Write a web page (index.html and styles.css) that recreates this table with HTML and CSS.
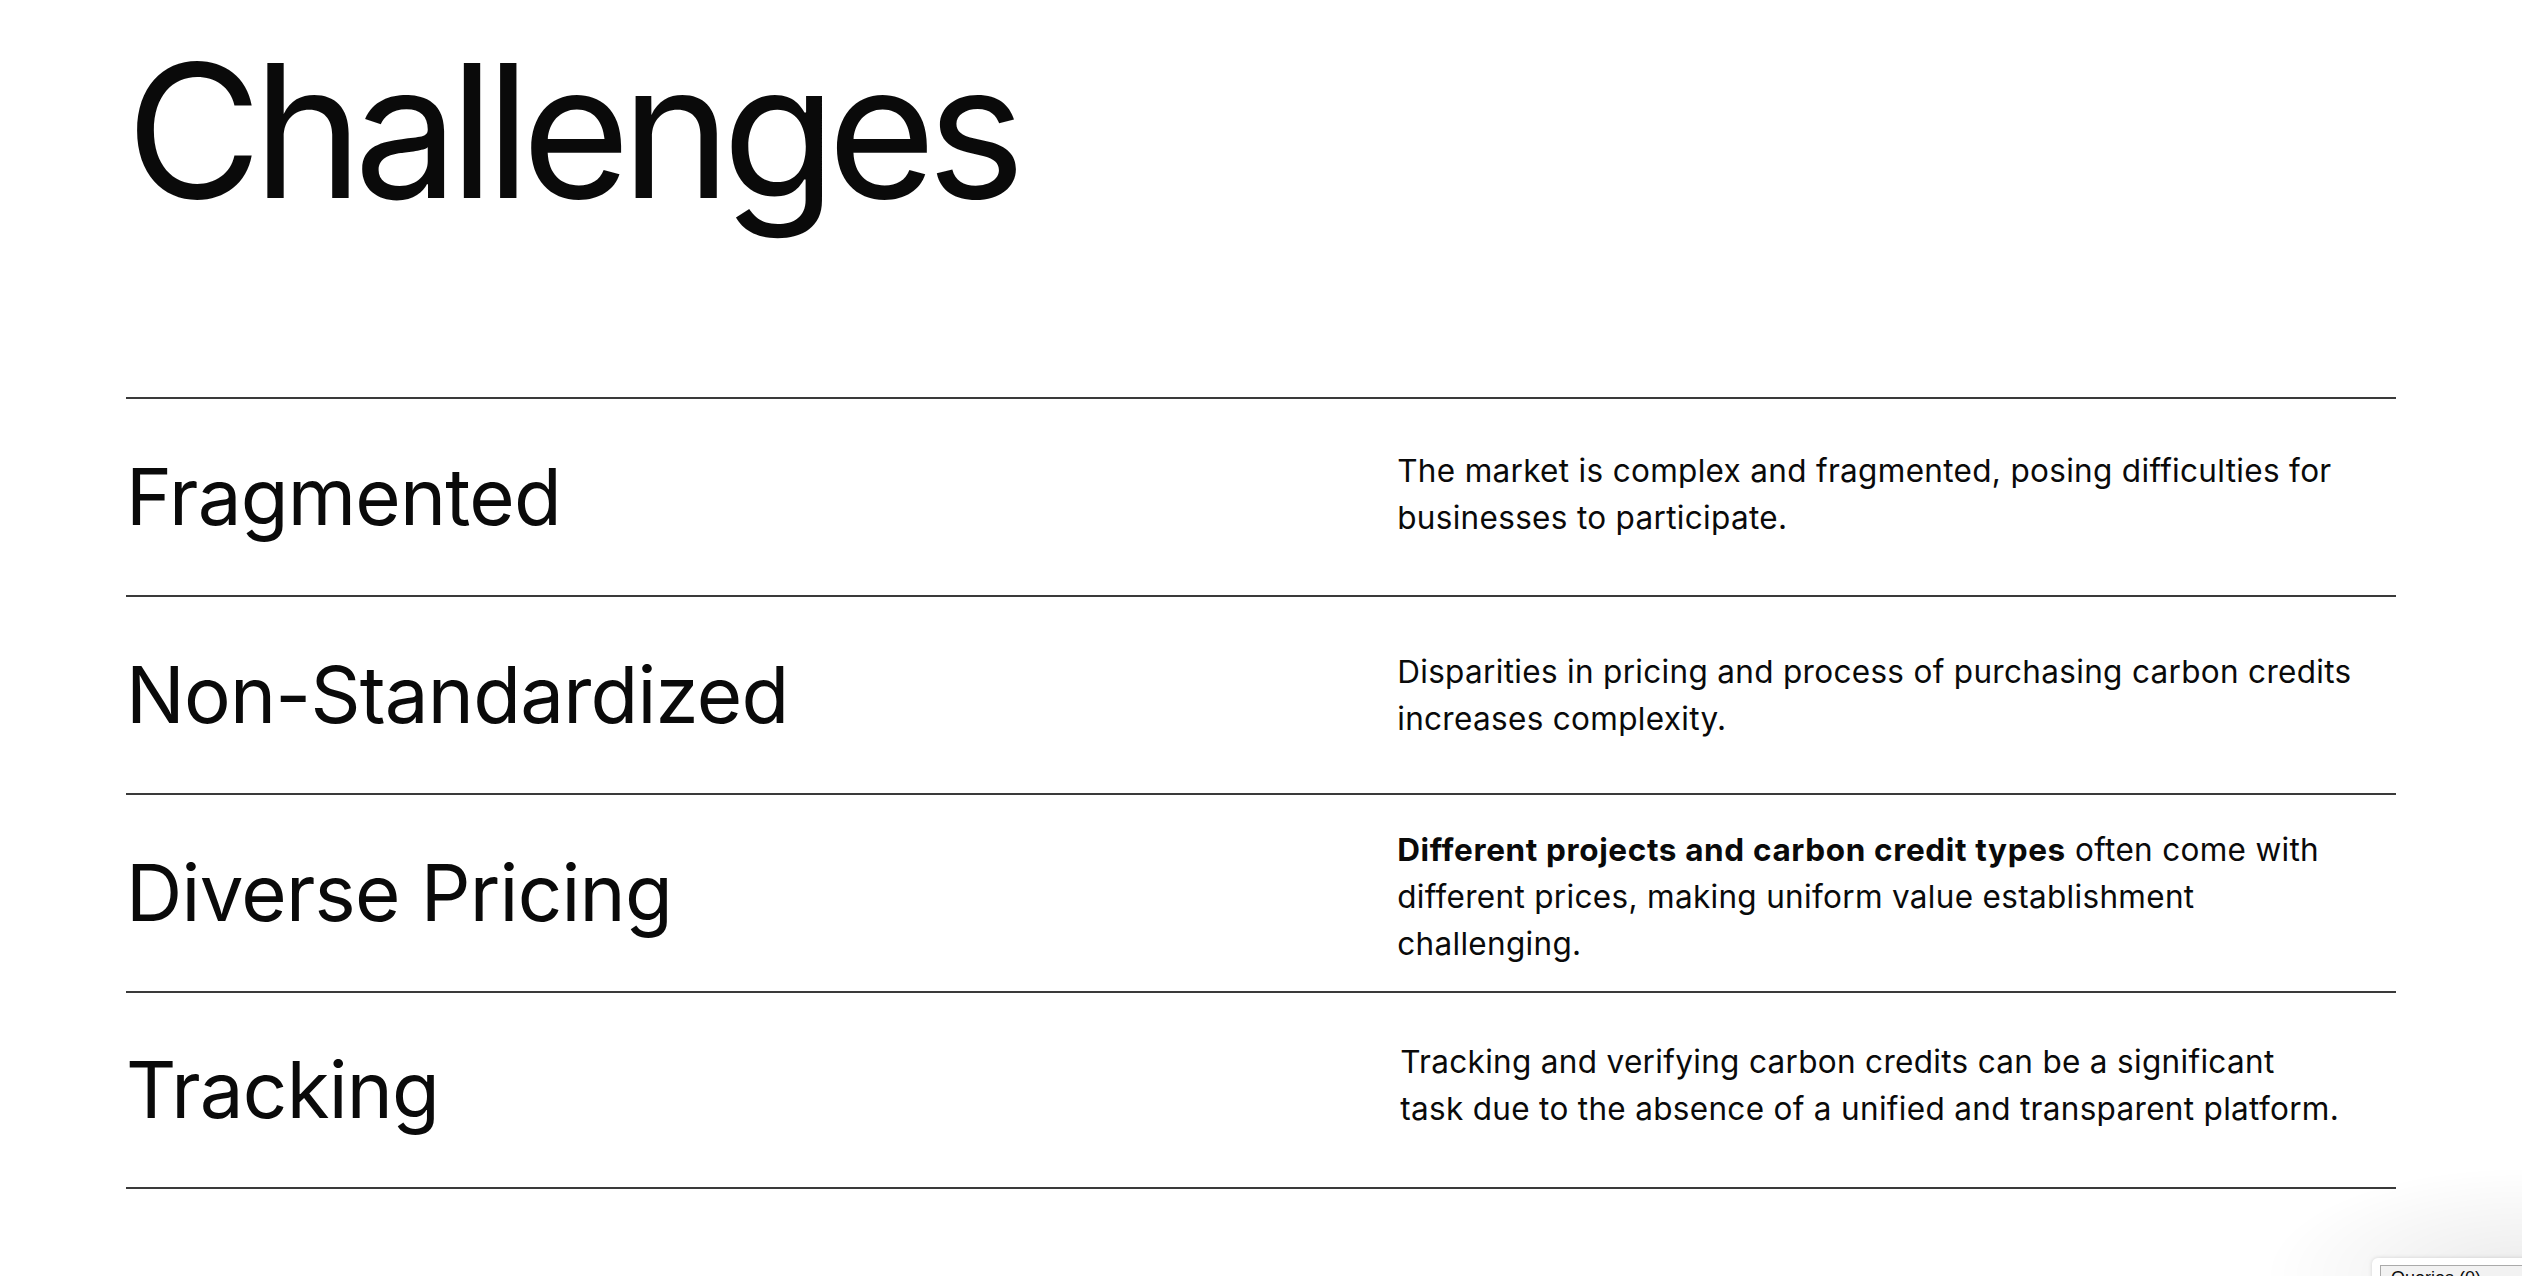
FILE: index.html
```html
<!DOCTYPE html>
<html lang="en">
<head>
<meta charset="utf-8">
<title>Challenges</title>
<link rel="stylesheet" href="styles.css">
</head>
<body>
<main class="page">
  <h1 class="title">Challenges</h1>
  <section class="list">
    <div class="row">
      <h2 class="row-title">Fragmented</h2>
      <p class="row-text">The market is complex and fragmented, posing difficulties for businesses to participate.</p>
    </div>
    <div class="row">
      <h2 class="row-title">Non-Standardized</h2>
      <p class="row-text row-text--low">Disparities in pricing and process of purchasing carbon credits increases complexity.</p>
    </div>
    <div class="row">
      <h2 class="row-title">Diverse Pricing</h2>
      <p class="row-text row-text--lower"><strong>Different projects and carbon credit types</strong> often come with different prices, making uniform value establishment challenging.</p>
    </div>
    <div class="row">
      <h2 class="row-title">Tracking</h2>
      <p class="row-text row-text--indent">Tracking and verifying carbon credits can be a significant<br>task due to the absence of a unified and transparent platform.</p>
    </div>
  </section>
</main>
<div class="corner-shade"></div>
<div class="corner-widget"><div class="corner-widget-inner">Queries (0)</div></div>
</body>
</html>
```
FILE: styles.css
```css
* { box-sizing: border-box; }
html, body { margin: 0; padding: 0; background: #fff; }
body {
  font-family: "Inter", "Liberation Sans", sans-serif;
  color: #0a0a0a;
  overflow: hidden;
  height: 1276px;
}
.page {
  padding: 0 5%;
}
.title {
  margin: 0;
  padding-top: 38px;
  font-weight: 400;
  font-size: 186px;
  line-height: 1;
  letter-spacing: -0.048em;
  height: 397px;
}
.list {
  display: flex;
  flex-direction: column;
}
.row {
  display: grid;
  grid-template-columns: 56% 44%;
  align-items: center;
  min-height: 198px;
  border-top: 2px solid #3a3a3a;
}
.row:last-child { border-bottom: 2px solid #3a3a3a; }
.row-title {
  margin: 0;
  font-weight: 400;
  font-size: 78px;
  line-height: 1.2;
  letter-spacing: -0.01em;
}
.row-text {
  margin: 0 0 6px;
  font-size: 31.5px;
  line-height: 47px;
  letter-spacing: 0.01em;
  max-width: 990px;
}
.row-text--low { margin: 0; }
.row-text--lower { margin: 6px 0 0; }
.row-text strong { font-weight: 700; letter-spacing: 0.02em; }
.row-text--indent { padding-left: 3px; margin-bottom: 10px; }
.corner-shade {
  position: fixed;
  right: 0; bottom: 0;
  width: 260px; height: 110px;
  background: radial-gradient(ellipse at 100% 100%, rgba(0,0,0,0.08), rgba(0,0,0,0) 70%);
}
.corner-widget {
  position: fixed;
  left: 2372px; top: 1258px;
  width: 200px; height: 40px;
  background: #fff;
  border-radius: 6px;
  box-shadow: 0 0 4px rgba(0,0,0,0.15);
  padding: 7px 0 0 8px;
}
.corner-widget-inner {
  border: 1px solid #aaa;
  background: #f2f2f2;
  font-family: "Liberation Sans", sans-serif;
  font-size: 18px;
  padding: 2px 10px;
}
```
